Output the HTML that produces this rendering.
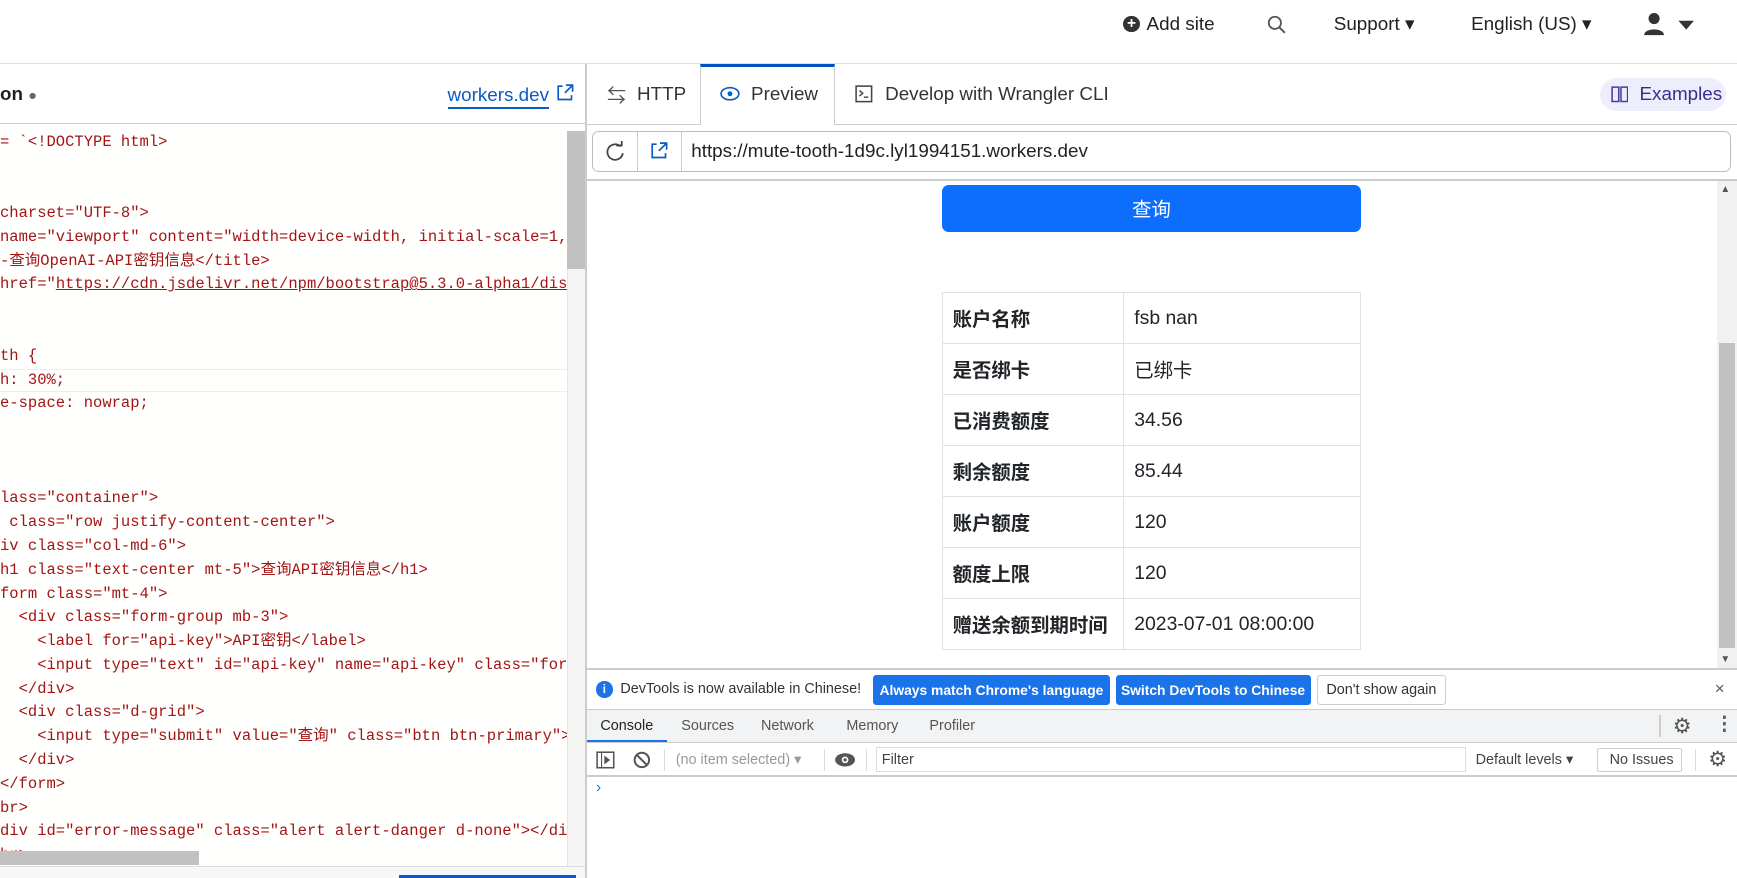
<!DOCTYPE html>
<html><head><meta charset="utf-8"><style>
*{box-sizing:border-box;margin:0;padding:0}
html,body{width:1737px;height:878px;overflow:hidden;background:#fff}
#w{position:relative;width:1568px;height:793px;zoom:1.10778;font-family:"Liberation Sans","Noto Sans CJK SC",sans-serif;color:#222;overflow:hidden}
.a{position:absolute}
.code{font-family:"Liberation Mono",monospace;font-size:14px;color:#a31515;white-space:pre;line-height:21.47px}
.tab{position:absolute;top:58px;height:54px;font-size:17px;color:#333;display:flex;align-items:center}
td{border:1px solid #dee2e6;height:46px;padding:0 9px;font-size:17.5px;color:#212529}
td.k{font-weight:bold;width:164px}
.dt{position:absolute;font-family:"Liberation Sans","Noto Sans CJK SC",sans-serif;font-size:13px;color:#333}
.bb{position:absolute;top:609px;height:27px;border-radius:3px;background:#1a73e8;color:#fff;font-size:12.5px;font-weight:bold;display:flex;align-items:center;justify-content:center}
</style></head><body><div id="w">
<!-- header -->
<div class="a" style="left:0;top:0;width:1568px;height:58px;border-bottom:1px solid #ddd"></div>
<div class="a" style="left:1014px;top:14px;width:15px;height:15px;border-radius:50%;background:#333;color:#fff;font-size:14px;line-height:14px;text-align:center;font-weight:bold">+</div>
<div class="a" style="left:1035px;top:12px;font-size:17px;color:#222">Add site</div>
<svg class="a" style="left:1143px;top:13px" width="20" height="20"><circle cx="8" cy="8" r="5.5" fill="none" stroke="#555" stroke-width="1.6"/><path d="M12 12l5 5" stroke="#555" stroke-width="1.8"/></svg>
<div class="a" style="left:1204px;top:12px;font-size:17px">Support ▾</div>
<div class="a" style="left:1328px;top:12px;font-size:17px">English (US) ▾</div>
<svg class="a" style="left:1483px;top:12px" width="50" height="22"><circle cx="10" cy="5" r="5" fill="#333"/><path d="M1 20c0-7 18-7 18 0z" fill="#333"/><path d="M32 7h14l-7 8z" fill="#333"/></svg>
<!-- left panel -->
<div class="a" style="left:0;top:58px;width:528px;height:54px;border-bottom:1px solid #ccc"></div>
<div class="a" style="left:0;top:75px;font-size:17px;font-weight:bold;color:#222">on <span style="color:#666;font-size:13px">●</span></div>
<div class="a" style="left:404px;top:75px;font-size:17px;color:#0a5bc4;border-bottom:2px solid #0a5bc4;line-height:22px">workers.dev</div>
<svg class="a" style="left:502px;top:76px" width="16" height="16"><path d="M6 2H2v12h12v-4M9 1h6v6M15 1L8 8" fill="none" stroke="#0a5bc4" stroke-width="1.5"/></svg>
<div class="a" style="left:0;top:113px;width:528px;height:680px;background:#fffffe"></div>
<div class="a" style="left:0;top:333px;width:512px;height:21px;border-top:1px solid #eee;border-bottom:1px solid #eee"></div>
<div class="a code" style="left:0;top:118px">= `&lt;!DOCTYPE html&gt;


charset="UTF-8"&gt;
name="viewport" content="width=device-width, initial-scale=1,
-查询OpenAI-API密钥信息&lt;/title&gt;
href="<span style="text-decoration:underline">https://cdn.jsdelivr.net/npm/bootstrap@5.3.0-alpha1/dist</span>


th {
h: 30%;
e-space: nowrap;



lass="container"&gt;
 class="row justify-content-center"&gt;
iv class="col-md-6"&gt;
h1 class="text-center mt-5"&gt;查询API密钥信息&lt;/h1&gt;
form class="mt-4"&gt;
  &lt;div class="form-group mb-3"&gt;
    &lt;label for="api-key"&gt;API密钥&lt;/label&gt;
    &lt;input type="text" id="api-key" name="api-key" class="form
  &lt;/div&gt;
  &lt;div class="d-grid"&gt;
    &lt;input type="submit" value="查询" class="btn btn-primary"&gt;
  &lt;/div&gt;
&lt;/form&gt;
br&gt;
div id="error-message" class="alert alert-danger d-none"&gt;&lt;/di
br&gt;</div>
<div class="a" style="left:512px;top:118px;width:16px;height:675px;background:#f5f5f5;border-left:1px solid #e5e5e5"></div>
<div class="a" style="left:512px;top:118px;width:16px;height:125px;background:#c1c1c1"></div>
<div class="a" style="left:0;top:768px;width:180px;height:13px;background:#c1c1c1"></div>
<div class="a" style="left:0;top:782px;width:528px;height:11px;background:#f7f7f7;border-top:1px solid #ddd"></div>
<div class="a" style="left:360px;top:790px;width:160px;height:3px;background:#0a5bc4"></div>
<div class="a" style="left:528px;top:58px;width:2px;height:735px;background:#ccc"></div>
<!-- right tabs -->
<div class="a" style="left:530px;top:112px;width:1038px;height:1px;background:#ccc"></div>
<div class="tab" style="left:548px"><span style="color:#555;margin-right:10px">⇆</span>HTTP</div>
<div class="a" style="left:632px;top:58px;width:122px;height:55px;background:#fff;border-left:1px solid #ccc;border-right:1px solid #ccc;border-top:3px solid #0051c3"></div>
<div class="tab" style="left:650px"><svg width="18" height="14" style="margin-right:10px"><ellipse cx="9" cy="7" rx="8" ry="5.5" fill="none" stroke="#0a5bc4" stroke-width="1.5"/><circle cx="9" cy="7" r="2.2" fill="#0a5bc4"/></svg>Preview</div>
<div class="tab" style="left:772px"><svg width="16" height="16" style="margin-right:11px"><rect x="1" y="1" width="14" height="14" fill="none" stroke="#444" stroke-width="1.4"/><path d="M4 5l3 2.5L4 10M8 11h4" fill="none" stroke="#444" stroke-width="1.3"/></svg>Develop with Wrangler CLI</div>
<div class="a" style="left:1444px;top:70px;width:114px;height:30px;border-radius:15px;background:#eeedfc"></div>
<svg class="a" style="left:1454px;top:78px" width="16" height="15"><path d="M1 1h6v13H1zM9 1h6v13H9z" fill="none" stroke="#4a3aa8" stroke-width="1.4"/></svg>
<div class="a" style="left:1480px;top:75px;font-size:17px;color:#3b2d8f">Examples</div>
<!-- url bar -->
<div class="a" style="left:534px;top:118px;width:1029px;height:37px;border:1px solid #bbb;border-radius:6px"></div>
<div class="a" style="left:575px;top:119px;width:1px;height:35px;background:#ccc"></div>
<div class="a" style="left:615px;top:119px;width:1px;height:35px;background:#ccc"></div>
<svg class="a" style="left:545px;top:127px" width="20" height="20"><path d="M15 5A7 7 0 1 0 17 11" fill="none" stroke="#444" stroke-width="1.6"/><path d="M11 4h5V0" fill="none" stroke="#444" stroke-width="1.6"/></svg>
<svg class="a" style="left:587px;top:128px" width="16" height="16"><path d="M6 2H2v12h12v-4M9 1h6v6M15 1L8 8" fill="none" stroke="#0a5bc4" stroke-width="1.5"/></svg>
<div class="a" style="left:624px;top:126px;font-size:17px;color:#222">https://mute-tooth-1d9c.lyl1994151.workers.dev</div>
<div class="a" style="left:530px;top:162px;width:1038px;height:1px;background:#ccc"></div>
<!-- preview -->
<div class="a" style="left:1550px;top:163px;width:18px;height:440px;background:#f1f1f1"></div>
<div class="a" style="left:1552px;top:310px;width:14px;height:275px;background:#c1c1c1"></div>
<div class="a" style="left:1553px;top:166px;font-size:9px;color:#555">▲</div>
<div class="a" style="left:1553px;top:590px;font-size:9px;color:#555">▼</div>
<div class="a" style="left:850px;top:167px;width:379px;height:42px;background:#0d6efd;border-radius:6px;color:#fff;font-size:17.5px;display:flex;align-items:center;justify-content:center">查询</div>
<table class="a" style="left:850px;top:264px;width:379px;border-collapse:collapse">
<tr><td class="k">账户名称</td><td>fsb nan</td></tr>
<tr><td class="k">是否绑卡</td><td>已绑卡</td></tr>
<tr><td class="k">已消费额度</td><td>34.56</td></tr>
<tr><td class="k">剩余额度</td><td>85.44</td></tr>
<tr><td class="k">账户额度</td><td>120</td></tr>
<tr><td class="k">额度上限</td><td>120</td></tr>
<tr><td class="k">赠送余额到期时间</td><td>2023-07-01 08:00:00</td></tr>
</table>
<!-- devtools -->
<div class="a" style="left:530px;top:603px;width:1038px;height:2px;background:#ccc"></div>
<div class="a" style="left:538px;top:615px;width:15px;height:15px;border-radius:50%;background:#1a73e8;color:#fff;font-size:11px;font-weight:bold;text-align:center;line-height:15px">i</div>
<div class="dt" style="left:560px;top:615px">DevTools is now available in Chinese!</div>
<div class="bb" style="left:788px;width:214px">Always match Chrome's language</div>
<div class="bb" style="left:1007px;width:176px">Switch DevTools to Chinese</div>
<div class="a" style="left:1189px;top:609px;width:116px;height:27px;border:1px solid #ccc;border-radius:3px;font-size:13px;color:#333;display:flex;align-items:center;justify-content:center">Don't show again</div>
<div class="dt" style="left:1548px;top:613px;font-size:15px;color:#555">×</div>
<div class="a" style="left:530px;top:640px;width:1038px;height:31px;background:#f1f3f4;border-top:1px solid #ccc;border-bottom:1px solid #ccc"></div>
<div class="dt" style="left:542px;top:648px;color:#222">Console</div>
<div class="a" style="left:530px;top:668px;width:72px;height:2px;background:#1a73e8"></div>
<div class="dt" style="left:615px;top:648px;color:#555">Sources</div>
<div class="dt" style="left:687px;top:648px;color:#555">Network</div>
<div class="dt" style="left:764px;top:648px;color:#555">Memory</div>
<div class="dt" style="left:839px;top:648px;color:#555">Profiler</div>
<div class="a" style="left:1498px;top:645px;width:1px;height:20px;background:#ccc"></div>
<div class="dt" style="left:1510px;top:644px;font-size:19px;color:#555">⚙</div>
<div class="dt" style="left:1548px;top:644px;font-size:17px;color:#555;font-weight:bold">⋮</div>
<div class="a" style="left:530px;top:700px;width:1038px;height:1px;background:#ccc"></div>
<svg class="a" style="left:538px;top:677px" width="18" height="18"><rect x="1" y="2" width="15" height="14" fill="none" stroke="#555" stroke-width="1.4"/><path d="M5 2v14M8 6l4 3-4 3z" stroke="#555" fill="#555"/></svg>
<svg class="a" style="left:571px;top:677px" width="18" height="18"><circle cx="8" cy="9" r="6.5" fill="none" stroke="#555" stroke-width="1.8"/><path d="M4 5l8 8" stroke="#555" stroke-width="1.8"/></svg>
<div class="a" style="left:599px;top:676px;width:1px;height:20px;background:#ddd"></div>
<div class="dt" style="left:610px;top:679px;color:#999">(no item selected) ▾</div>
<div class="a" style="left:744px;top:676px;width:1px;height:20px;background:#ddd"></div>
<svg class="a" style="left:753px;top:678px" width="20" height="16"><ellipse cx="10" cy="8" rx="9" ry="6" fill="#555"/><circle cx="10" cy="8" r="3" fill="#fff"/><circle cx="10" cy="8" r="1.5" fill="#555"/></svg>
<div class="a" style="left:782px;top:676px;width:1px;height:20px;background:#ddd"></div>
<div class="a" style="left:791px;top:674px;width:532px;height:23px;border:1px solid #ddd;background:#fff"></div>
<div class="dt" style="left:796px;top:679px;color:#444">Filter</div>
<div class="dt" style="left:1332px;top:679px;color:#444">Default levels ▾</div>
<div class="a" style="left:1442px;top:675px;width:76px;height:22px;border:1px solid #ccc;border-radius:2px"></div>
<div class="dt" style="left:1453px;top:679px;color:#444">No Issues</div>
<div class="a" style="left:1530px;top:676px;width:1px;height:20px;background:#ddd"></div>
<div class="dt" style="left:1542px;top:673px;font-size:19px;color:#555">⚙</div>
<div class="dt" style="left:538px;top:703px;color:#1a73e8;font-size:14px">›</div>
</div></body></html>
